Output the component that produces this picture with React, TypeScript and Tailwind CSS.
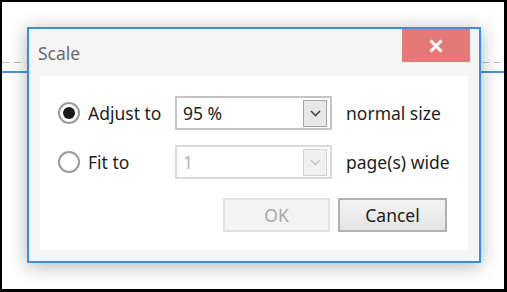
import React from "react";

function Chevron({ color }: { color: string }) {
  return (
    <svg width="11" height="7" viewBox="0 0 11 7">
      <polyline points="1,1 5.5,5.5 10,1" fill="none" stroke={color} strokeWidth="1.6" />
    </svg>
  );
}

function Radio({ checked }: { checked: boolean }) {
  return (
    <div className="w-[22px] h-[22px] rounded-full border-2 border-[#9a9a9a] bg-white flex items-center justify-center shrink-0">
      {checked && <div className="w-[12px] h-[12px] rounded-full bg-[#1a1a1a]" />}
    </div>
  );
}

function Combo({ value, disabled }: { value: string; disabled?: boolean }) {
  return (
    <div
      className={
        disabled
          ? "w-[157px] h-[34px] shrink-0 border-2 border-[#dadada] bg-white flex items-center justify-between pl-[6px] pr-[3px]"
          : "w-[157px] h-[34px] shrink-0 border-2 border-[#c4c4c4] bg-white flex items-center justify-between pl-[6px] pr-[3px]"
      }
    >
      <span className={disabled ? "text-[#b4b4b4]" : "text-[#222]"}>{value}</span>
      <div
        className={
          disabled
            ? "w-[24px] h-[27px] border border-[#d2d2d2] bg-[#f0f0f0] flex items-center justify-center"
            : "w-[24px] h-[27px] border border-[#a3a3a3] bg-[#e8e8e8] flex items-center justify-center"
        }
      >
        <Chevron color={disabled ? "#c4c4c4" : "#444444"} />
      </div>
    </div>
  );
}

export default function App() {
  return (
    <div className="w-[507px] h-[292px] border-black border-l-2 border-t-2 border-r-[3px] border-b-[3px] bg-white relative overflow-hidden font-['Noto_Sans',sans-serif] text-[17.5px] leading-[24px]">
      {/* background page content */}
      <div className="mt-[60px] h-px bg-[repeating-linear-gradient(90deg,#bdbdbd_0_7px,transparent_7px_12px)]" />
      <div className="mt-[8px] h-[2px] bg-[#4a95dc]" />

      {/* dialog window */}
      <div className="absolute left-[25px] top-[25px] w-[454px] h-[236px] border-2 border-[#3a8ee0] bg-[#f5f5f5] flex flex-col shadow-[0_3px_18px_rgba(0,0,0,0.3)]">
        <div className="h-[47px] flex justify-between items-start shrink-0">
          <div className="pl-[9px] pt-[12px] text-[#6a6a6a]">Scale</div>
          <div className="w-[68px] h-[33px] mr-[9px] bg-[#e77878] flex items-center justify-center">
            <svg width="14" height="14" viewBox="0 0 14 14">
              <path d="M1.5 1.5 L12.5 12.5 M12.5 1.5 L1.5 12.5" stroke="#ffffff" strokeWidth="3" fill="none" />
            </svg>
          </div>
        </div>

        <div className="mx-[11px] mb-[11px] flex-1 bg-white pt-[20px] pl-[18px] pr-[21px] pb-[18px] flex flex-col text-[#1e1e1e]">
          <div className="flex items-center h-[34px] whitespace-nowrap">
            <div className="w-[117px] shrink-0 flex items-center">
              <Radio checked />
              <span className="ml-[8px]">Adjust to</span>
            </div>
            <Combo value="95 %" />
            <span className="ml-[14px] shrink-0">normal size</span>
          </div>
          <div className="flex items-center h-[34px] mt-[15px] whitespace-nowrap">
            <div className="w-[117px] shrink-0 flex items-center">
              <Radio checked={false} />
              <span className="ml-[8px]">Fit to</span>
            </div>
            <Combo value="1" disabled />
            <span className="ml-[14px] shrink-0">page(s) wide</span>
          </div>
          <div className="mt-[19px] flex justify-end gap-[8px]">
            <div className="w-[107px] h-[34px] border-2 border-[#e2e2e2] bg-[#f4f4f4] text-[#a6a6a6] flex items-center justify-center">
              OK
            </div>
            <div className="w-[109px] h-[34px] border-2 border-[#b0b0b0] bg-[linear-gradient(#f3f3f3,#e5e5e5)] text-[#222] flex items-center justify-center">
              Cancel
            </div>
          </div>
        </div>
      </div>
    </div>
  );
}
